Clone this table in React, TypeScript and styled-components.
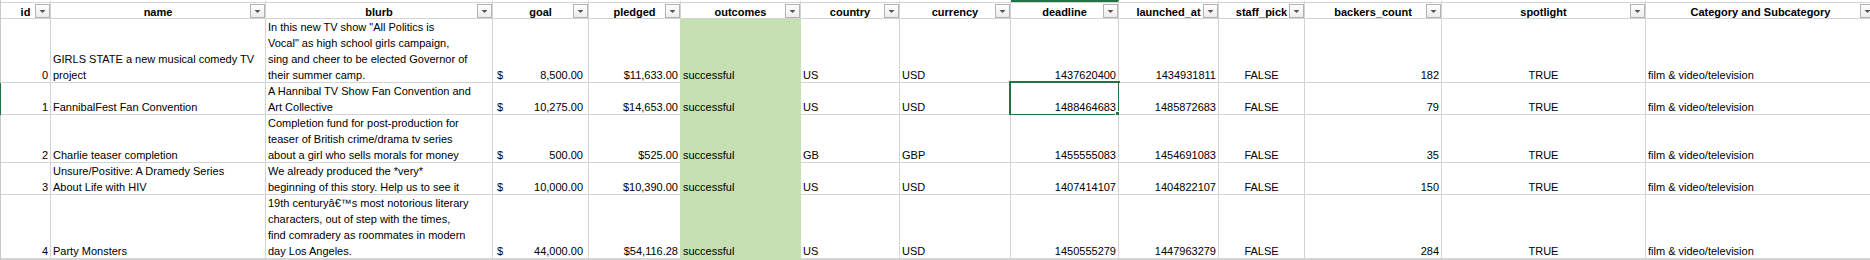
import React from "react";
import styled, { createGlobalStyle } from "styled-components";

type Align = "left" | "right" | "center";

type Column = {
  title: string;
  width: number;
};

type Project = {
  id: string;
  name: string[];
  blurb: string[];
  goal: string;
  pledged: string;
  country: string;
  currency: string;
  deadline: string;
  launched: string;
  backers: string;
  lines: number;
  selected?: boolean;
};

const GRID = "#d4d4d4";
const SUCCESS = "#c6e0b4";
const EXCEL_GREEN = "#217346";

const columns: Column[] = [
  { title: "id", width: 50 },
  { title: "name", width: 215 },
  { title: "blurb", width: 227 },
  { title: "goal", width: 96 },
  { title: "pledged", width: 92 },
  { title: "outcomes", width: 120 },
  { title: "country", width: 99 },
  { title: "currency", width: 111 },
  { title: "deadline", width: 108 },
  { title: "launched_at", width: 100 },
  { title: "staff_pick", width: 86 },
  { title: "backers_count", width: 137 },
  { title: "spotlight", width: 204 },
  { title: "Category and Subcategory", width: 230 },
];

const template = columns.map((c) => `${c.width}px`).join(" ");

const projects: Project[] = [
  {
    id: "0",
    name: ["GIRLS STATE a new musical comedy TV", "project"],
    blurb: [
      'In this new TV show "All Politics is',
      'Vocal" as high school girls campaign,',
      "sing and cheer to be elected Governor of",
      "their summer camp.",
    ],
    goal: "8,500.00",
    pledged: "$11,633.00",
    country: "US",
    currency: "USD",
    deadline: "1437620400",
    launched: "1434931811",
    backers: "182",
    lines: 4,
  },
  {
    id: "1",
    name: ["FannibalFest Fan Convention"],
    blurb: ["A Hannibal TV Show Fan Convention and", "Art Collective"],
    goal: "10,275.00",
    pledged: "$14,653.00",
    country: "US",
    currency: "USD",
    deadline: "1488464683",
    launched: "1485872683",
    backers: "79",
    lines: 2,
    selected: true,
  },
  {
    id: "2",
    name: ["Charlie teaser completion"],
    blurb: [
      "Completion fund for post-production for",
      "teaser of British crime/drama tv series",
      "about a girl who sells morals for money",
    ],
    goal: "500.00",
    pledged: "$525.00",
    country: "GB",
    currency: "GBP",
    deadline: "1455555083",
    launched: "1454691083",
    backers: "35",
    lines: 3,
  },
  {
    id: "3",
    name: ["Unsure/Positive: A Dramedy Series", "About Life with HIV"],
    blurb: [
      "We already produced the *very*",
      "beginning of this story. Help us to see it",
    ],
    goal: "10,000.00",
    pledged: "$10,390.00",
    country: "US",
    currency: "USD",
    deadline: "1407414107",
    launched: "1404822107",
    backers: "150",
    lines: 2,
  },
  {
    id: "4",
    name: ["Party Monsters"],
    blurb: [
      "19th centuryâ€™s most notorious literary",
      "characters, out of step with the times,",
      "find comradery as roommates in modern",
      "day Los Angeles.",
    ],
    goal: "44,000.00",
    pledged: "$54,116.28",
    country: "US",
    currency: "USD",
    deadline: "1450555279",
    launched: "1447963279",
    backers: "284",
    lines: 4,
  },
];

const GlobalStyle = createGlobalStyle`
  html, body {
    margin: 0;
    padding: 0;
    background: #ffffff;
    overflow: hidden;
  }
  body {
    font-family: "Liberation Sans", Arial, sans-serif;
    font-size: 11px;
    color: #000000;
  }
`;

const Sheet = styled.div`
  display: flex;
  flex-direction: column;
  width: max-content;
`;

const Row = styled.div<{ $height: number; $marked?: boolean }>`
  display: grid;
  grid-template-columns: ${template};
  height: ${(p) => p.$height}px;
  border-left: 1px solid ${(p) => (p.$marked ? EXCEL_GREEN : "#c8c8c8")};
`;

const StripCell = styled.div<{ $active?: boolean }>`
  box-sizing: border-box;
  border-right: 1px solid ${GRID};
  border-bottom: 1px solid ${GRID};
  border-top: 2px solid ${(p) => (p.$active ? EXCEL_GREEN : "#ffffff")};
`;

const HeaderCell = styled.div`
  position: relative;
  box-sizing: border-box;
  border-right: 1px solid ${GRID};
  border-bottom: 1px solid ${GRID};
  display: flex;
  flex-direction: column;
  justify-content: flex-end;
  text-align: center;
  font-weight: bold;
  line-height: 16px;
  white-space: nowrap;
  overflow: hidden;
`;

const HeaderText = styled.div`
  margin-bottom: -2px;
`;

const FilterButton = styled.div`
  position: absolute;
  right: 0;
  bottom: 0;
  box-sizing: border-box;
  width: 15px;
  height: 14px;
  border: 1px solid #b3b3b3;
  background: linear-gradient(#ffffff, #ededed);
  display: flex;
  align-items: center;
  justify-content: center;
`;

const Cell = styled.div<{ $align?: Align; $fill?: string; $edge?: string }>`
  position: relative;
  box-sizing: border-box;
  padding: 0 2px;
  background: ${(p) => p.$fill ?? "#ffffff"};
  border-right: 1px solid ${(p) => p.$edge ?? p.$fill ?? GRID};
  border-bottom: 1px solid ${(p) => p.$fill ?? GRID};
  display: flex;
  flex-direction: column;
  justify-content: flex-end;
  text-align: ${(p) => p.$align ?? "left"};
  line-height: 16px;
  white-space: nowrap;
`;

const Clip = styled.div`
  overflow: hidden;
  margin-bottom: -1px;
`;

const Money = styled.div`
  display: flex;
  justify-content: space-between;
  padding: 0 3px 0 2px;
  margin-bottom: -1px;
`;

const Selection = styled.div`
  position: absolute;
  top: -2px;
  left: -2px;
  right: -2px;
  bottom: -2px;
  border: 2px solid ${EXCEL_GREEN};
  pointer-events: none;
`;

const FillHandle = styled.div`
  position: absolute;
  right: -4px;
  bottom: -4px;
  width: 5px;
  height: 5px;
  background: ${EXCEL_GREEN};
  border: 1px solid #ffffff;
`;

function FilterArrow() {
  return (
    <svg width="7" height="5" viewBox="0 0 7 5">
      <polygon points="0.5,1 6.5,1 3.5,4" fill="#555555" />
    </svg>
  );
}

function Lines(props: { lines: string[] }) {
  return (
    <Clip>
      {props.lines.map((line, index) => (
        <div key={index}>{line}</div>
      ))}
    </Clip>
  );
}

function ProjectRow(props: { project: Project }) {
  const { project } = props;
  return (
    <Row $height={project.lines * 16} $marked={project.selected}>
      <Cell $align="right">
        <Lines lines={[project.id]} />
      </Cell>
      <Cell>
        <Lines lines={project.name} />
      </Cell>
      <Cell>
        <Lines lines={project.blurb} />
      </Cell>
      <Cell>
        <Money>
          <span>$</span>
          <span>{project.goal}</span>
        </Money>
      </Cell>
      <Cell $align="right" $edge={SUCCESS}>
        <Lines lines={[project.pledged]} />
      </Cell>
      <Cell $fill={SUCCESS}>
        <Lines lines={["successful"]} />
      </Cell>
      <Cell>
        <Lines lines={[project.country]} />
      </Cell>
      <Cell>
        <Lines lines={[project.currency]} />
      </Cell>
      <Cell $align="right">
        <Lines lines={[project.deadline]} />
        {project.selected && (
          <Selection>
            <FillHandle />
          </Selection>
        )}
      </Cell>
      <Cell $align="right">
        <Lines lines={[project.launched]} />
      </Cell>
      <Cell $align="center">
        <Lines lines={["FALSE"]} />
      </Cell>
      <Cell $align="right">
        <Lines lines={[project.backers]} />
      </Cell>
      <Cell $align="center">
        <Lines lines={["TRUE"]} />
      </Cell>
      <Cell>
        <Lines lines={["film & video/television"]} />
      </Cell>
    </Row>
  );
}

export default function App() {
  return (
    <>
      <GlobalStyle />
      <Sheet>
        <Row $height={3}>
          {columns.map((c) => (
            <StripCell key={c.title} $active={c.title === "deadline"} />
          ))}
        </Row>
        <Row $height={16}>
          {columns.map((c) => (
            <HeaderCell key={c.title}>
              <HeaderText>{c.title}</HeaderText>
              <FilterButton>
                <FilterArrow />
              </FilterButton>
            </HeaderCell>
          ))}
        </Row>
        {projects.map((p) => (
          <ProjectRow key={p.id} project={p} />
        ))}
        {/* next row, only its top pixel is on screen */}
        <Row $height={1}>
          {columns.map((c) => (
            <Cell
              key={c.title}
              $fill={c.title === "outcomes" ? SUCCESS : undefined}
              $edge={c.title === "pledged" ? SUCCESS : undefined}
            />
          ))}
        </Row>
      </Sheet>
    </>
  );
}
